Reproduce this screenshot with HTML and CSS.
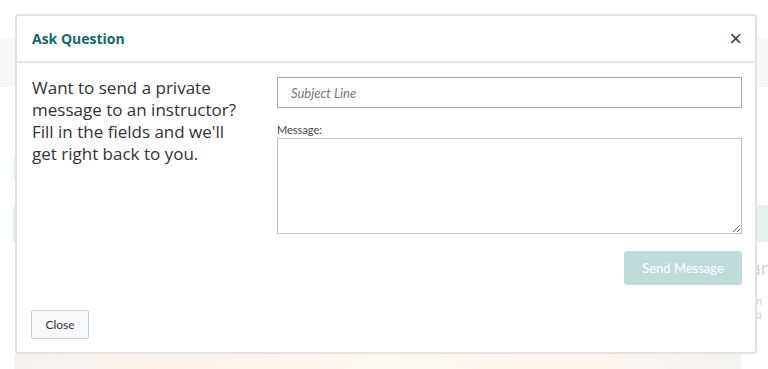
FILE: index.html
```html
<!DOCTYPE html>
<html>
  <head>
    <meta charset="UTF-8" />
    <title>Ask Question</title>
    <link rel="stylesheet" href="styles.css">
  </head>

  <body>
    <div class="page">
      <div class="page-bar"></div>
      <div class="page-body">
        <div class="page-note"></div>
        <div class="page-banner"></div>
        <div class="page-row">
          <div class="page-main">
            <div class="page-hero"></div>
          </div>
          <div class="page-side">
            <h3 class="side-title">ar</h3>
            <span class="side-line">an</span>
            <span class="side-line">ea</span>
          </div>
        </div>
      </div>
    </div>

    <div class="modal">
      <div class="modal-header">
        <h4 class="modal-title">Ask Question</h4>
        <button class="modal-x" type="button">&times;</button>
      </div>
      <div class="modal-body">
        <p class="modal-intro">
          Want to send a private message to an instructor? Fill in the fields
          and we'll get right back to you.
        </p>
        <form class="ask-form">
          <input class="ask-subject" type="text" placeholder="Subject Line" />
          <label class="ask-label">Message:</label>
          <textarea class="ask-message"></textarea>
          <div class="ask-actions">
            <button class="btn-send" type="button" disabled>Send Message</button>
          </div>
        </form>
      </div>
      <div class="modal-footer">
        <button class="btn-close" type="button">Close</button>
      </div>
    </div>
  </body>
</html>
```

FILE: styles.css
```css
body {
  margin: 0;
  background: #fff;
  font-family: "Open Sans", "Liberation Sans", sans-serif;
}

/* page behind the dialog */
.page-bar {
  margin-top: 38px;
  height: 49px;
  background: #f7f7f7;
}

.page-body {
  padding-left: 13px;
}

.page-note {
  margin-top: 70px;
  width: 200px;
  height: 23px;
  background: #eaf3f2;
}

.page-banner {
  margin-top: 25px;
  height: 37px;
  background: #e7f1f0;
}

.page-row {
  display: flex;
}

.page-main {
  width: 734px;
}

.page-hero {
  margin-top: 112px;
  margin-left: 1px;
  height: 30px;
  background: linear-gradient(90deg, #f4f3f2 0%, #fcf3ea 20%, #fdf8f2 50%, #fdf6ee 80%, #f3f3f3 100%);
}

.page-side {
  padding-left: 10px;
  color: #d0d0d0;
}

.side-title {
  margin: 14px 0 0;
  font-size: 18px;
  font-weight: 400;
  line-height: 24px;
}

.side-line {
  display: block;
  font-family: Lato, sans-serif;
  font-size: 11px;
  line-height: 14px;
}

.side-title + .side-line {
  margin-top: 14px;
}

/* dialog */
.modal {
  position: absolute;
  left: 15px;
  top: 14px;
  width: 742px;
  height: 340px;
  box-sizing: border-box;
  background: #fff;
  border: 2px solid #e2e2e2;
  border-radius: 4px;
}

.modal-header {
  display: flex;
  align-items: center;
  justify-content: space-between;
  height: 45px;
  padding: 0 13px 0 15px;
  border-bottom: 2px solid #e4e4e4;
}

.modal-title {
  margin: 0;
  font-size: 14px;
  font-weight: 700;
  color: #0f6b63;
}

.modal-x {
  padding: 0;
  border: 0;
  background: none;
  font-family: "Liberation Sans", sans-serif;
  font-size: 22px;
  line-height: 20px;
  color: #444;
}

.modal-body {
  display: grid;
  grid-template-columns: 215px 1fr;
  column-gap: 30px;
  padding: 14px 13px 0 15px;
}

.modal-intro {
  margin: 0;
  font-size: 17px;
  line-height: 22px;
  color: #333;
}

.ask-form {
  display: flex;
  flex-direction: column;
}

.ask-subject {
  height: 31px;
  box-sizing: border-box;
  margin: 0;
  padding: 0 13px;
  border: 1px solid #a8a8a8;
  font-family: Lato, sans-serif;
  font-size: 13px;
}

.ask-subject::placeholder {
  font-style: italic;
  color: #777;
}

.ask-label {
  margin-top: 15px;
  font-family: Lato, sans-serif;
  font-size: 11px;
  line-height: 14px;
  color: #444;
}

.ask-message {
  height: 96px;
  box-sizing: border-box;
  margin: 1px 0 0;
  border: 1px solid #c4c4c4;
}

.ask-actions {
  display: flex;
  justify-content: flex-end;
  margin-top: 17px;
}

.btn-send {
  width: 118px;
  height: 34px;
  border: 0;
  border-radius: 3px;
  background: #c0dcda;
  color: #fff;
  font-family: Lato, sans-serif;
  font-size: 13px;
}

.modal-footer {
  padding: 25px 14px 0;
}

.btn-close {
  width: 58px;
  height: 29px;
  border: 1px solid #ccc;
  border-radius: 2px;
  background: #f8f9fb;
  color: #333;
  font-family: Lato, sans-serif;
  font-size: 12px;
}
```
